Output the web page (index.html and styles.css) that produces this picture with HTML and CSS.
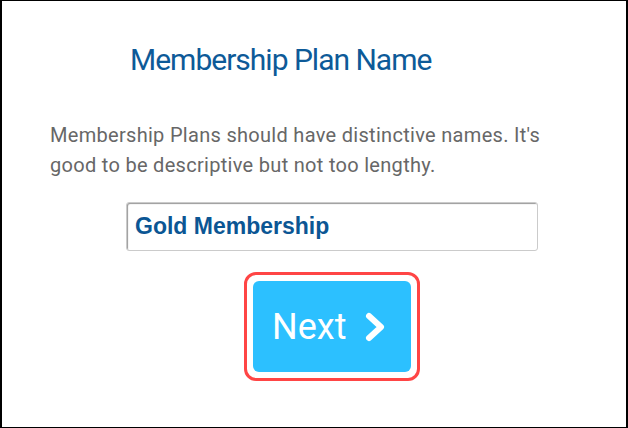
FILE: index.html
```html
<!DOCTYPE html>
<html lang="en">
<head>
<meta charset="utf-8">
<title>Membership Plan Name</title>
<link rel="stylesheet" href="styles.css">
</head>
<body>
<div class="frame">
  <div class="panel">
    <h1 class="title">Membership Plan Name</h1>
    <p class="lead">Membership Plans should have distinctive names. It's good to be descriptive but not too lengthy.</p>
    <input class="name-input" type="text" value="Gold Membership">
    <div class="highlight">
      <button class="next-btn" type="button">
        <span class="next-label">Next</span>
        <svg class="chevron" width="24" height="32" viewBox="0 0 24 32" aria-hidden="true">
          <polyline points="5,5 17,16 5,27" fill="none" stroke="#fff" stroke-width="6" stroke-linecap="round" stroke-linejoin="round"/>
        </svg>
      </button>
    </div>
  </div>
</div>
</body>
</html>
```

FILE: styles.css
```css
* { box-sizing: border-box; }

html, body {
  margin: 0;
  padding: 0;
  background: #fff;
}

.frame {
  width: 628px;
  height: 428px;
  border-style: solid;
  border-color: #000;
  border-width: 1px 2px 1px 2px;
  background: #fff;
  overflow: hidden;
}

.panel {
  width: 612px;
  padding: 39px 0 0 48px;
}

.title {
  margin: 0 0 0 80px;
  font-family: Roboto, "Open Sans", sans-serif;
  font-weight: normal;
  font-size: 30px;
  letter-spacing: -1px;
  line-height: 40px;
  color: #0d5a98;
}

.lead {
  width: 520px;
  margin: 40px 0 0 0;
  font-family: Roboto, "Open Sans", sans-serif;
  font-size: 20px;
  letter-spacing: 0.3px;
  line-height: 30px;
  color: #676767;
}

.name-input {
  display: block;
  width: 412px;
  height: 49px;
  margin: 22px auto 0;
  padding: 0 8px;
  border: 1px solid #cbcbcb;
  border-radius: 3px;
  box-shadow: inset 1px 1px 1px #9a9a9a;
  font-family: "Liberation Sans", Arial, sans-serif;
  font-weight: bold;
  font-size: 23px;
  color: #0b5694;
  background: #fff;
  outline: none;
}

.highlight {
  width: fit-content;
  margin: 21px auto 0;
  padding: 6px;
  border: 3px solid #ff4545;
  border-radius: 12px;
}

.next-btn {
  display: flex;
  align-items: center;
  gap: 18px;
  width: 158px;
  height: 91px;
  padding: 0 0 0 19px;
  border: none;
  border-radius: 6px;
  background: #2cc0ff;
  color: #fff;
  font-family: Roboto, "Open Sans", sans-serif;
  font-size: 36px;
  cursor: pointer;
}

.next-label {
  line-height: 1;
}

.chevron {
  display: block;
}
```
